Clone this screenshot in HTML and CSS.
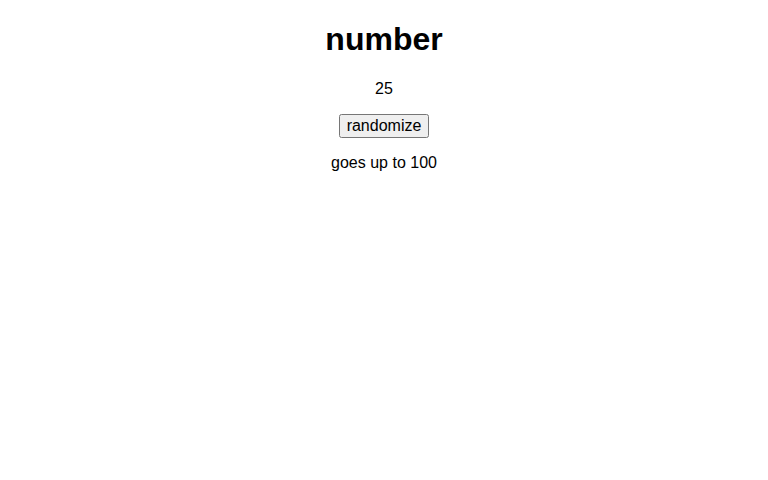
FILE: index.html
```html
<!DOCTYPE html>
<html lang="en">
<head>
  <meta charset="UTF-8">
  <title>number</title>
  <link rel="stylesheet" href="styles.css">
</head>
<body>
  <h1>number</h1>
  <p id="value">25</p>
  <p><button onclick="randomize()">randomize</button></p>
  <p>goes up to 100</p>

  <script>
    function randomize() {
      document.getElementById('value').textContent = Math.floor(Math.random() * 100) + 1;
    }
  </script>
</body>
</html>
```

FILE: styles.css
```css
body {
  font-family: "Liberation Sans", Arial, sans-serif;
  text-align: center;
  margin: 0;
}
button {
  font-family: "Liberation Sans", Arial, sans-serif;
  font-size: 16px;
}
```
